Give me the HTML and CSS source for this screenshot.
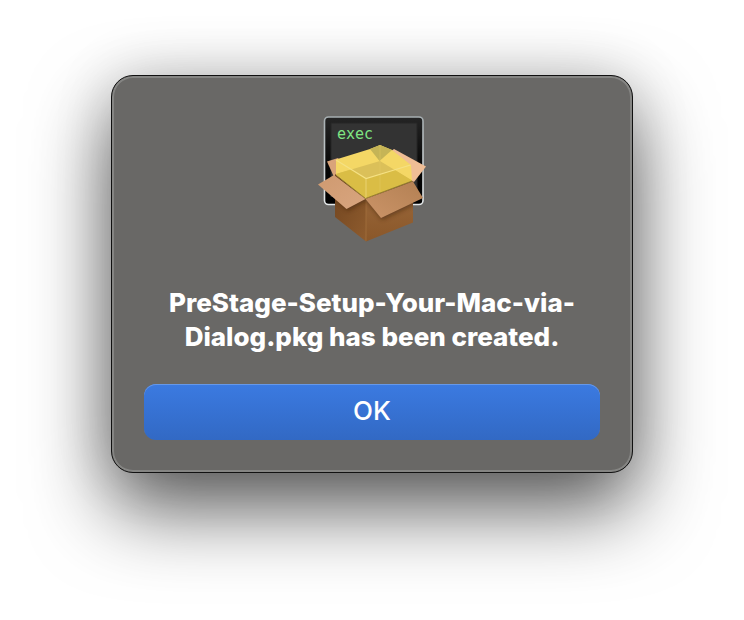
FILE: index.html
```html
<!DOCTYPE html>
<html lang="en">
<head>
  <meta charset="UTF-8">
  <meta name="viewport" content="width=device-width, initial-scale=1.0">
  <title>Package created</title>
  <link rel="stylesheet" href="styles.css">
</head>
<body>

  <main class="dialog" role="alertdialog" aria-labelledby="message">
    <svg class="app-icon" viewBox="0 0 120 136" aria-hidden="true">
      <defs>
        <linearGradient id="frame" x1="0" y1="0" x2="0" y2="1">
          <stop offset="0" stop-color="#252525"/>
          <stop offset="0.6" stop-color="#050505"/>
          <stop offset="1" stop-color="#000"/>
        </linearGradient>
        <linearGradient id="rim" x1="0" y1="0" x2="0" y2="1">
          <stop offset="0" stop-color="#a5adb0"/>
          <stop offset="1" stop-color="#e4e8e9"/>
        </linearGradient>
        <linearGradient id="sideLeft" x1="0" y1="0" x2="1" y2="1">
          <stop offset="0" stop-color="#70441f"/>
          <stop offset="1" stop-color="#8f5c2e"/>
        </linearGradient>
        <linearGradient id="sideRight" x1="0" y1="0" x2="0" y2="1">
          <stop offset="0" stop-color="#9d6b3e"/>
          <stop offset="1" stop-color="#8a5729"/>
        </linearGradient>
        <linearGradient id="flapLeft" x1="0" y1="0" x2="1" y2="1">
          <stop offset="0" stop-color="#cf9a70"/>
          <stop offset="1" stop-color="#d8a57f"/>
        </linearGradient>
        <linearGradient id="flapRight" x1="0" y1="1" x2="1" y2="0">
          <stop offset="0" stop-color="#cb9468"/>
          <stop offset="1" stop-color="#b38053"/>
        </linearGradient>
        <filter id="soft" x="-20%" y="-20%" width="140%" height="140%">
          <feGaussianBlur stdDeviation="2"/>
        </filter>
        <clipPath id="body">
          <path d="M23 67 53.500 90.500 101 73V114.500L54 133.500 23 109Z"/>
        </clipPath>
      </defs>

      <!-- terminal -->
      <rect x="12.500" y="9" width="98.500" height="87.500" rx="4" fill="url(#frame)" stroke="url(#rim)" stroke-width="1.600"/>
      <rect x="19" y="15" width="86" height="74" fill="#333"/>
      <path d="M19 89V15H105V89" fill="none" stroke="#262626"/>
      <text class="exec" x="25" y="31">exec</text>

      <!-- back flaps -->
      <path d="M15 53.500 26 50 34 62 22 69Z" fill="#d9a47a"/>
      <path d="M82 41 114 58.500 102 74 66 53Z" fill="#efbd95"/>

      <!-- box body -->
      <path d="M23 66 54 90V133.500L23 109Z" fill="url(#sideLeft)"/>
      <path d="M54 90 101 73V114.500L54 133.500Z" fill="url(#sideRight)"/>
      <path d="M54 91V133" stroke="#a8733f" stroke-width="0.700"/>
      <g clip-path="url(#body)">
        <path d="M21 70 10 79 36 103 54 93 70 112 112 92 101 75Z" fill="#3d210b" opacity="0.500" filter="url(#soft)"/>
      </g>

      <!-- yellow contents -->
      <path d="M24 51.500 58 41 68 37 80 42 99 57 100 73 53.500 90.500 24 67Z" fill="#f4d765"/>
      <path d="M24 66 68 53 100 72.500 53.500 90.500Z" fill="#dbc059"/>
      <path d="M24 66 40 61.300 54 70.500 82 61.500 100 72.500 53.500 90.500Z" fill="#dabd45"/>
      <path d="M58 41 68 37 80 42 67.500 53Z" fill="#c5b456"/>
      <path d="M68 37V84" stroke="#e3ca62" stroke-width="0.500"/>
      <path d="M24 52 54 70.500 98.500 57" fill="none" stroke="#f5e184" stroke-width="1.200"/>
      <path d="M54 71V90" stroke="#e8cf6a" stroke-width="1.200"/>
      <path d="M24 67 53.500 90.500 100 73" fill="none" stroke="#96802c" stroke-width="1"/>

      <!-- front flaps -->
      <path d="M22 67 53.500 91 34.500 101 6 76.500Z" fill="url(#flapLeft)"/>
      <path d="M53.500 91 101 73.500 111 90 69 110Z" fill="url(#flapRight)"/>
    </svg>

    <h1 class="message" id="message">PreStage-Setup-Your-Mac-via-Dialog.pkg has been created.</h1>

    <button class="ok-button" type="button">OK</button>
  </main>

</body>
</html>
```

FILE: styles.css
```css
body {
  box-sizing: border-box;
  min-height: 100vh;
  margin: 0;
  padding: 75px 111px;
  background-color: #fff;
  font-family: Inter, "Liberation Sans", sans-serif;
}

.dialog {
  display: flex;
  flex-direction: column;
  align-items: center;
  padding: 32px;
  color: #fff;
  background-color: #696866;
  border: 1px solid #111;
  border-radius: 22px;
  box-shadow:
    inset 0 0 0 2px #858583,
    0 36px 80px rgba(0, 0, 0, 0.64),
    0 0 60px rgba(0, 0, 0, 0.14);
}

.app-icon {
  width: 120px;
  height: 136px;
}

.exec {
  font-family: "DejaVu Sans Mono", monospace;
  font-size: 15px;
  fill: #7fe583;
}

.message {
  margin: 42px 0 30px;
  font-size: 26px;
  line-height: 34px;
  font-weight: 800;
  text-align: center;
}

.ok-button {
  width: 100%;
  height: 56px;
  padding: 0 0 4px;
  border: none;
  border-radius: 12px;
  background: linear-gradient(#3b7ae1, #3269c4);
  box-shadow: inset 0 1px 0 #6698e8;
  color: #fff;
  font-family: inherit;
  font-size: 26px;
  font-weight: 500;
  cursor: pointer;
}

.ok-button:active {
  background: #2c5fb3;
}
```
